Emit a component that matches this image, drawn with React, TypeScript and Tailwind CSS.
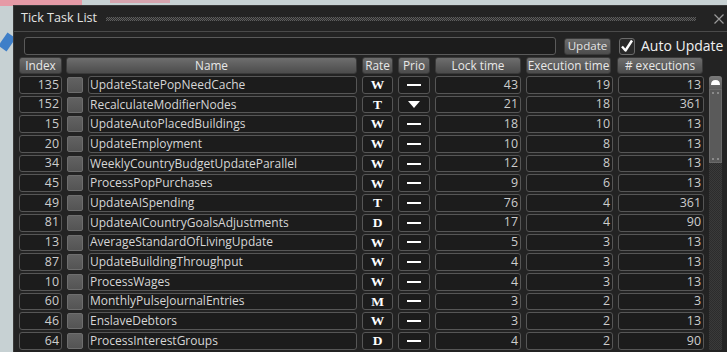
import React from "react";

type Row = {
  index: number;
  name: string;
  rate: string;
  prio: "none" | "down";
  lock: number;
  exec: number;
  count: number;
};

const rows: Row[] = [
  { index: 135, name: "UpdateStatePopNeedCache", rate: "W", prio: "none", lock: 43, exec: 19, count: 13 },
  { index: 152, name: "RecalculateModifierNodes", rate: "T", prio: "down", lock: 21, exec: 18, count: 361 },
  { index: 15, name: "UpdateAutoPlacedBuildings", rate: "W", prio: "none", lock: 18, exec: 10, count: 13 },
  { index: 20, name: "UpdateEmployment", rate: "W", prio: "none", lock: 10, exec: 8, count: 13 },
  { index: 34, name: "WeeklyCountryBudgetUpdateParallel", rate: "W", prio: "none", lock: 12, exec: 8, count: 13 },
  { index: 45, name: "ProcessPopPurchases", rate: "W", prio: "none", lock: 9, exec: 6, count: 13 },
  { index: 49, name: "UpdateAISpending", rate: "T", prio: "none", lock: 76, exec: 4, count: 361 },
  { index: 81, name: "UpdateAICountryGoalsAdjustments", rate: "D", prio: "none", lock: 17, exec: 4, count: 90 },
  { index: 13, name: "AverageStandardOfLivingUpdate", rate: "W", prio: "none", lock: 5, exec: 3, count: 13 },
  { index: 87, name: "UpdateBuildingThroughput", rate: "W", prio: "none", lock: 4, exec: 3, count: 13 },
  { index: 10, name: "ProcessWages", rate: "W", prio: "none", lock: 4, exec: 3, count: 13 },
  { index: 60, name: "MonthlyPulseJournalEntries", rate: "M", prio: "none", lock: 3, exec: 2, count: 3 },
  { index: 46, name: "EnslaveDebtors", rate: "W", prio: "none", lock: 3, exec: 2, count: 13 },
  { index: 64, name: "ProcessInterestGroups", rate: "D", prio: "none", lock: 4, exec: 2, count: 90 },
];

const cell = "h-[17.7px] shrink-0 rounded-[3px] border border-[#565656] bg-[#1c1c1c] flex items-center";
const head =
  "h-[17px] shrink-0 rounded-[3px] border border-[#3a3a3a] bg-gradient-to-b from-[#6e6e6e] to-[#4c4c4c] flex items-center justify-center text-[11.8px] text-[#e8e8e8] leading-none whitespace-nowrap";

const checker =
  "bg-[repeating-conic-gradient(#5e5e5e_0_25%,#2b2b2b_0_50%)] bg-[length:2px_2px]";

const App = () => {
  return (
    <div
      className="relative w-[727px] h-[352px] overflow-hidden bg-[#c7d1d3]"
      style={{ fontFamily: '"Open Sans", "Noto Sans", sans-serif' }}
    >
      {/* map behind the window */}
      <div className="absolute left-0 top-0 w-[82px] h-[6px] bg-[#e59aa6]" />
      <div className="absolute left-[110px] top-0 w-[60px] h-[3px] bg-[#d6a4ae]" />
      <div className="absolute left-[2px] top-[34px] w-[10px] h-[16px] bg-[#3f7fc8] rotate-[35deg]" />

      {/* window */}
      <div className="absolute left-[13px] top-[5px] w-[730px] h-[360px] bg-[#232323] border-l border-t border-[#3a3a3a]">
        {/* title bar */}
        <div className="h-[25px] flex items-center pl-[7px] pr-[20px] gap-[9px]">
          <span className="text-[12.6px] text-[#e4e4e4] leading-none">Tick Task List</span>
          <div className={`flex-1 h-[4px] mt-[1px] ${checker}`} />
          <svg width="12" height="12" viewBox="0 0 12 12" className="ml-[8px] mr-[-2px]">
            <path d="M1.5 1.5 L10.5 10.5 M10.5 1.5 L1.5 10.5" stroke="#9a9a9a" strokeWidth="1.2" />
          </svg>
        </div>
        <div className="h-[1px] bg-[#4a4a4a]" />

        {/* search row */}
        <div className="flex items-center mt-[5px] pl-[10px] h-[18px]">
          <div className="w-[532px] h-[18px] rounded-[3px] border border-[#5a5a5a] bg-[#1c1c1c]" />
          <div className="ml-[8px] w-[47px] h-[17px] rounded-[3px] border border-[#3a3a3a] bg-gradient-to-b from-[#6e6e6e] to-[#4c4c4c] flex items-center justify-center text-[11.6px] text-[#e4e4e4] leading-none">
            Update
          </div>
          <div className="ml-[8px] w-[16px] h-[17px] rounded-[3px] border border-[#6a6a6a] bg-[#2a2a2a] flex items-center justify-center">
            <svg width="14" height="14" viewBox="0 0 14 14">
              <path d="M2 7.5 L5.5 11.5 L12 1.5" stroke="#ffffff" strokeWidth="2.4" fill="none" strokeLinejoin="round" />
            </svg>
          </div>
          <span className="ml-[6px] text-[14px] text-[#f0f0f0] leading-none">Auto Update</span>
        </div>

        {/* header */}
        <div className="flex mt-[2px] pl-[5px]">
          <div className={`${head} w-[43px]`}>Index</div>
          <div className={`${head} w-[291px] ml-[4px]`}>Name</div>
          <div className={`${head} w-[31px] ml-[5px]`}>Rate</div>
          <div className={`${head} w-[32px] ml-[5px]`}>Prio</div>
          <div className={`${head} w-[86px] ml-[5px]`}>Lock time</div>
          <div className={`${head} w-[85px] ml-[5px]`}>Execution time</div>
          <div className={`${head} w-[86px] ml-[6px]`}># executions</div>
        </div>

        {/* body */}
        <div className="flex pl-[5px] mt-[2px]">
          <div className="flex flex-col gap-[2px]">
            {rows.map((r) => (
              <div key={r.index} className="flex text-[12.4px] text-[#cdcdcd] leading-none">
                <div className={`${cell} w-[43px] justify-end pr-[2px]`}>{r.index}</div>
                <div className="w-[16px] h-[16px] ml-[5px] mt-[1px] shrink-0 rounded-[2px] border border-[#6e6e6e] bg-gradient-to-b from-[#626262] to-[#545454]" />
                <div className={`${cell} w-[269px] ml-[5px] pl-[1px] text-[12px] text-[#d6d6d6]`}>{r.name}</div>
                <div className={`${cell} w-[31px] ml-[5px] justify-center`}>
                  <span
                    className="text-[13.5px] font-bold text-white"
                    style={{ fontFamily: '"Liberation Serif", serif' }}
                  >
                    {r.rate}
                  </span>
                </div>
                <div className={`${cell} w-[32px] ml-[5px] justify-center`}>
                  {r.prio === "down" ? (
                    <svg width="12" height="7" viewBox="0 0 12 7">
                      <path d="M0 0 H12 L6 7 Z" fill="#ffffff" />
                    </svg>
                  ) : (
                    <div className="w-[14px] h-[2px] bg-white" />
                  )}
                </div>
                <div className={`${cell} w-[86px] ml-[5px] justify-end pr-[2px]`}>{r.lock}</div>
                <div className={`${cell} w-[87px] ml-[5px] justify-end pr-[2px]`}>{r.exec}</div>
                <div className={`${cell} w-[86px] ml-[5px] justify-end pr-[2px]`}>{r.count}</div>
              </div>
            ))}
          </div>

          {/* scrollbar */}
          <div className="ml-[5px] w-[13px] flex flex-col">
            <div className="h-[13px] rounded-t-[3px] bg-gradient-to-b from-[#7a7a7a] to-[#5e5e5e] flex items-center justify-center">
              <svg width="9" height="5" viewBox="0 0 9 5">
                <path d="M0 5 Q0 0 4.5 0 Q9 0 9 5 Z" fill="#ffffff" />
              </svg>
            </div>
            <div className="h-[74px] bg-[#5a5a5a] border border-[#6a6a6a] flex flex-col justify-between py-[2px] items-center">
              <div className="flex gap-[3px]">
                <div className="w-[2px] h-[2px] bg-[#8a8a8a]" />
                <div className="w-[2px] h-[2px] bg-[#8a8a8a]" />
              </div>
              <div className="flex gap-[3px]">
                <div className="w-[2px] h-[2px] bg-[#8a8a8a]" />
                <div className="w-[2px] h-[2px] bg-[#8a8a8a]" />
              </div>
            </div>
            <div className="flex-1 bg-[repeating-conic-gradient(#3a3a3a_0_25%,#2c2c2c_0_50%)] bg-[length:2px_2px]" />
          </div>
        </div>
      </div>
    </div>
  );
};

export default App;
